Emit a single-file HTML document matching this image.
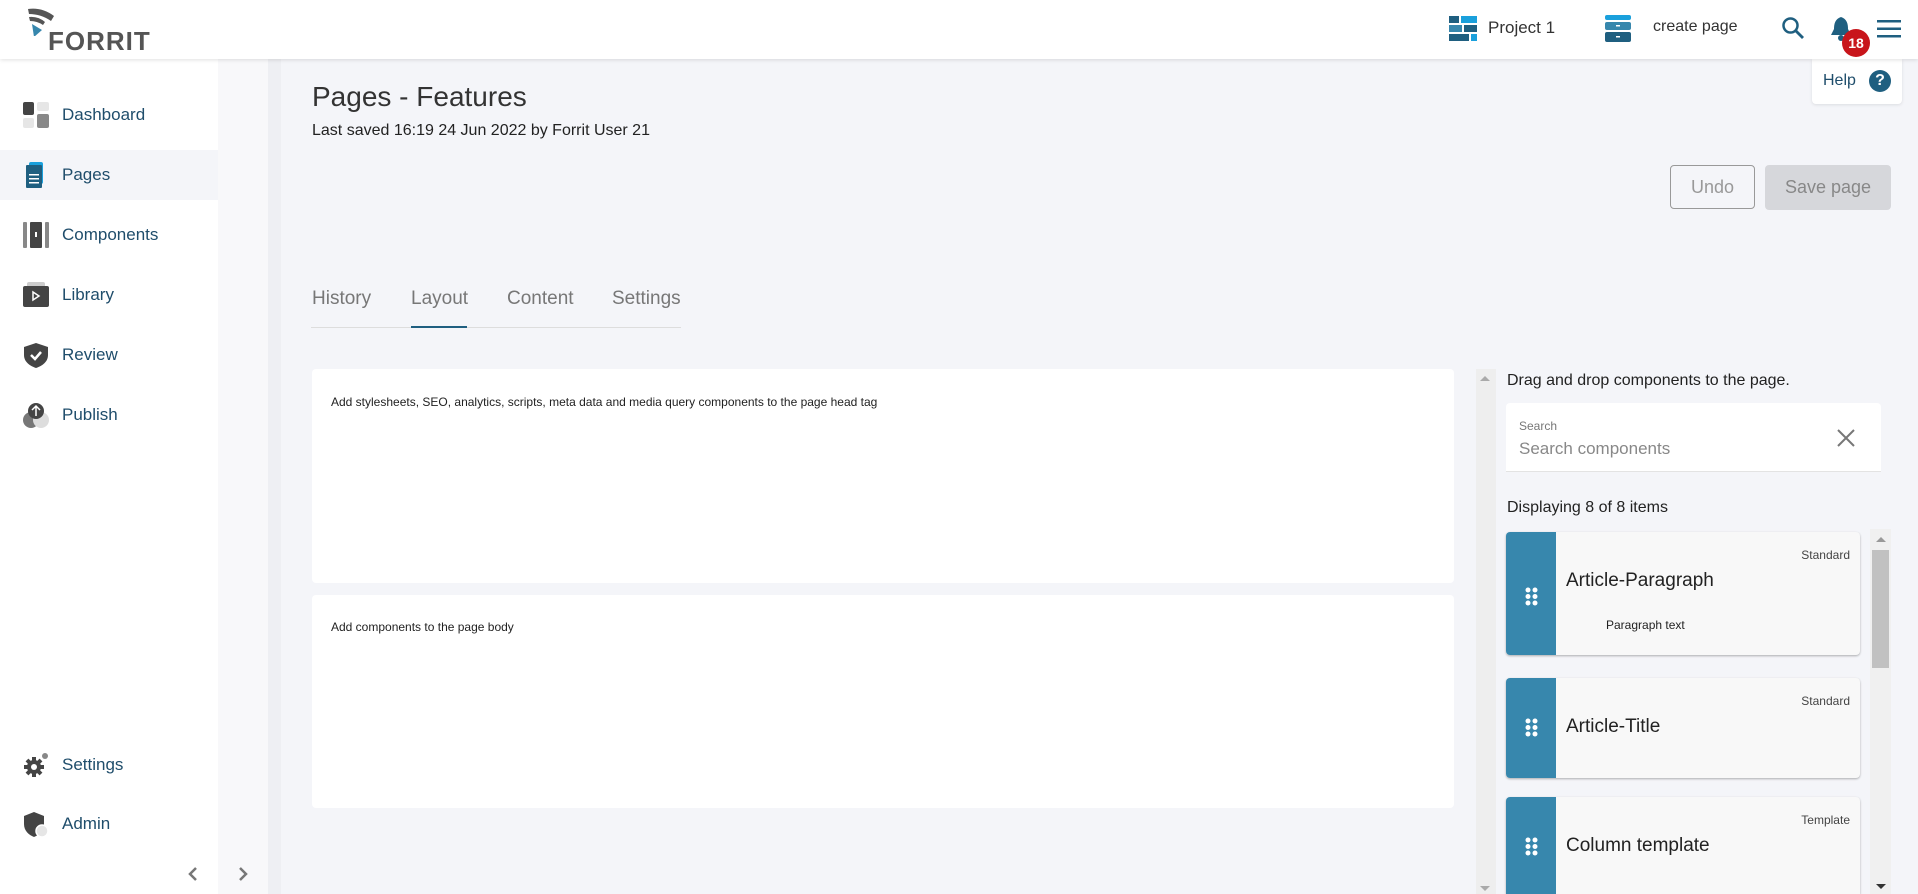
<!DOCTYPE html>
<html style="overflow:hidden;height:894px"><head><meta charset="utf-8"><style>
*{margin:0;padding:0;box-sizing:border-box}
html,body{overflow:hidden}
body{width:1918px;height:894px;background:#f4f5f9;font-family:"Liberation Sans",sans-serif;position:relative;color:#333}
.abs{position:absolute}
#hdr{left:0;top:0;width:1918px;height:59px;background:#fff;box-shadow:0 1px 4px rgba(0,0,0,.12);z-index:5}
#side{left:0;top:59px;width:218px;height:835px;background:#fff}
#strip{left:218px;top:59px;width:50px;height:835px;background:#f8f8fa}
#strip2{left:268px;top:59px;width:13px;height:835px;background:#eeeff3}
.nav{position:absolute;left:0;width:218px;height:50px;font-size:17px;color:#1f4d6b;line-height:50px;padding-left:62px}
.nav svg{position:absolute;left:23px;top:12px}
.sel{background:#f4f5f9}
.box{background:#fff;border-radius:4px;position:absolute}
.card{position:absolute;left:1506px;width:354px;background:#f8f8f8;border-radius:4px;box-shadow:0 1px 2px rgba(0,0,0,.3);overflow:hidden}
.card .bar{position:absolute;left:0;top:0;bottom:0;width:50px;background:#3787ad}
.card .t{position:absolute;left:60px;font-size:19px;color:#222}
.card .k{position:absolute;right:10px;top:16px;font-size:12px;color:#444}
.dots{position:absolute;left:19px;width:13px}
</style></head><body>
<div id="hdr" class="abs">
  <svg class="abs" style="left:26px;top:6px" width="30" height="30" viewBox="0 0 30 30"><path d="M2 3 Q16 1 28 10 L25 15 Q15 8 3 8Z" fill="#555"/><path d="M3 11 Q12 10 19 16 L17 19 Q11 15 4 15Z" fill="#555"/><path d="M6 18 L16 24 L8 31Z" fill="#3787ad"/></svg>
  <div class="abs" style="left:48px;top:26px;font-size:26px;font-weight:bold;color:#555;letter-spacing:1px">FORRIT</div>
  <svg class="abs" style="left:1449px;top:16px" width="28" height="26" viewBox="0 0 28 26"><rect x="0" y="0" width="10" height="7" fill="#1f5f80"/><rect x="12" y="0" width="16" height="7" fill="#1aa0dc"/><rect x="0" y="9" width="13" height="7" fill="#3787ad"/><rect x="15" y="9" width="13" height="7" fill="#1f5f80"/><rect x="0" y="18" width="20" height="7" fill="#1f5f80"/><rect x="22" y="18" width="6" height="7" fill="#1aa0dc"/></svg>
  <div class="abs" style="left:1488px;top:18px;font-size:17px;color:#333">Project 1</div>
  <svg class="abs" style="left:1605px;top:15px" width="26" height="27" viewBox="0 0 26 27"><rect y="0" width="26" height="5" rx="2" fill="#1aa0dc"/><rect y="7" width="26" height="8" rx="2" fill="#3787ad"/><rect y="17" width="26" height="10" rx="2" fill="#1f5f80"/><rect x="11" y="10" width="4" height="1.5" fill="#fff"/><rect x="11" y="21" width="4" height="1.5" fill="#fff"/></svg>
  <div class="abs" style="left:1653px;top:18px;font-size:16px;color:#333">create page</div>
  <svg class="abs" style="left:1781px;top:16px" width="24" height="24" viewBox="0 0 24 24"><circle cx="9.5" cy="9.5" r="7" fill="none" stroke="#1f5f80" stroke-width="2.5"/><path d="M14.5 14.5 L22 22" stroke="#1f5f80" stroke-width="2.8"/></svg>
  <svg class="abs" style="left:1830px;top:16px" width="22" height="26" viewBox="0 0 22 26"><path d="M11 1 C5 3 4 8 4 13 L1 19 L21 19 L18 13 C18 8 17 3 11 1Z" fill="#1f5f80"/><circle cx="11" cy="22" r="3" fill="#1f5f80"/></svg>
  <div class="abs" style="left:1842px;top:29px;width:28px;height:28px;border-radius:50%;background:#c8151b;color:#fff;font-size:14px;font-weight:bold;text-align:center;line-height:28px">18</div>
  <svg class="abs" style="left:1877px;top:20px" width="24" height="18" viewBox="0 0 24 18"><rect y="0" width="24" height="2.5" fill="#1f5f80"/><rect y="7.5" width="24" height="2.5" fill="#1f5f80"/><rect y="15" width="24" height="2.5" fill="#1f5f80"/></svg>
</div>
<div id="side" class="abs">
  <div class="nav" style="top:31px"><svg width="26" height="26" viewBox="0 0 26 26"><rect x="0" y="0" width="11" height="13" rx="2" fill="#444"/><rect x="14" y="0" width="12" height="9" rx="2" fill="#e6e6e6"/><rect x="0" y="16" width="11" height="10" rx="2" fill="#e6e6e6"/><rect x="14" y="12" width="12" height="14" rx="2" fill="#888"/></svg>Dashboard</div>
  <div class="nav sel" style="top:91px"><svg width="26" height="26" viewBox="0 0 26 26"><rect x="6" y="0" width="14" height="22" rx="2" fill="#1aa0dc"/><rect x="3" y="3" width="16" height="23" rx="1" fill="#1f5f80"/><rect x="6" y="12" width="10" height="1.5" fill="#fff"/><rect x="6" y="16" width="10" height="1.5" fill="#fff"/><rect x="6" y="20" width="10" height="1.5" fill="#fff"/></svg>Pages</div>
  <div class="nav" style="top:151px"><svg width="26" height="26" viewBox="0 0 26 26"><rect x="0" y="0" width="4" height="26" rx="1" fill="#888"/><rect x="7" y="0" width="12" height="26" rx="1" fill="#444"/><rect x="22" y="0" width="4" height="26" rx="1" fill="#888"/><rect x="12" y="10" width="2" height="5" fill="#fff"/></svg>Components</div>
  <div class="nav" style="top:211px"><svg width="26" height="26" viewBox="0 0 26 26"><rect x="4" y="0" width="18" height="6" rx="2" fill="#ccc"/><rect x="0" y="4" width="26" height="21" rx="2" fill="#444"/><path d="M10 10 L16 14 L10 18Z" fill="none" stroke="#fff" stroke-width="1.5"/></svg>Library</div>
  <div class="nav" style="top:271px"><svg width="26" height="26" viewBox="0 0 26 26"><path d="M13 1 L25 5 L25 13 C25 20 19 24 13 26 C7 24 1 20 1 13 L1 5Z" fill="#444"/><path d="M8 13 L12 17 L18 10" stroke="#fff" stroke-width="2.5" fill="none"/></svg>Review</div>
  <div class="nav" style="top:331px"><svg width="26" height="26" viewBox="0 0 26 26"><circle cx="8" cy="18" r="8" fill="#777"/><circle cx="18" cy="18" r="8" fill="#ddd"/><circle cx="13" cy="9" r="8" fill="#444"/><path d="M13 14 L13 5 M9 8 L13 4 L17 8" stroke="#fff" stroke-width="1.5" fill="none"/></svg>Publish</div>
  <div class="nav" style="top:681px"><svg width="26" height="26" viewBox="0 0 26 26"><g stroke="#444" stroke-width="4"><path d="M11 5 L11 25 M1 15 L21 15 M4 8 L18 22 M18 8 L4 22"/></g><circle cx="11" cy="15" r="7" fill="#444"/><circle cx="11" cy="15" r="3" fill="#fff"/><circle cx="22" cy="4" r="3" fill="#888"/></svg>Settings</div>
  <div class="nav" style="top:740px"><svg width="26" height="26" viewBox="0 0 26 26"><path d="M11 1 L21 5 L21 13 C21 20 16 24 11 26 C6 24 1 20 1 13 L1 5Z" fill="#444"/><circle cx="19" cy="20" r="6" fill="#e6e6e6" stroke="#fff" stroke-width="1.5"/></svg>Admin</div>
  <svg class="abs" style="left:187px;top:807px" width="12" height="16" viewBox="0 0 12 16"><path d="M9 2 L3 8 L9 14" stroke="#777" stroke-width="2.5" fill="none"/></svg>
</div>
<div id="strip" class="abs"></div>
<div id="strip2" class="abs"></div>
<svg class="abs" style="left:237px;top:866px" width="12" height="16" viewBox="0 0 12 16"><path d="M3 2 L9 8 L3 14" stroke="#777" stroke-width="2.5" fill="none"/></svg>

<div class="abs" style="left:312px;top:81px;font-size:28px;color:#333">Pages - Features</div>
<div class="abs" style="left:312px;top:122px;font-size:16px;color:#222">Last saved 16:19 24 Jun 2022 by Forrit User 21</div>
<div class="abs" style="left:1812px;top:59px;width:90px;height:45px;background:#fff;border-radius:0 0 4px 4px;box-shadow:0 1px 3px rgba(0,0,0,.1)"><span class="abs" style="left:11px;top:13px;font-size:16px;color:#1f4d6b">Help</span><div class="abs" style="left:57px;top:11px;width:22px;height:22px;border-radius:50%;background:#1f5f80;color:#fff;font-weight:bold;font-size:16px;text-align:center;line-height:22px">?</div></div>
<div class="abs" style="left:1670px;top:165px;width:85px;height:44px;border:1px solid #999;border-radius:4px;text-align:center;line-height:42px;font-size:18px;color:#999">Undo</div>
<div class="abs" style="left:1765px;top:165px;width:126px;height:45px;background:#d6d7db;border-radius:4px;text-align:center;line-height:45px;font-size:18px;color:#888">Save page</div>

<div class="abs" style="left:312px;top:288px;font-size:19px;color:#777">History</div>
<div class="abs" style="left:411px;top:288px;font-size:19px;color:#777">Layout</div>
<div class="abs" style="left:507px;top:288px;font-size:19px;color:#777">Content</div>
<div class="abs" style="left:612px;top:288px;font-size:19px;color:#777">Settings</div>
<div class="abs" style="left:311px;top:327px;width:370px;height:1px;background:#ddd"></div>
<div class="abs" style="left:411px;top:326px;width:56px;height:2px;background:#1f5f80"></div>

<div class="box" style="left:312px;top:369px;width:1142px;height:214px"><div class="abs" style="left:19px;top:26px;font-size:12px;color:#222">Add stylesheets, SEO, analytics, scripts, meta data and media query components to the page head tag</div></div>
<div class="box" style="left:312px;top:595px;width:1142px;height:213px"><div class="abs" style="left:19px;top:25px;font-size:12px;color:#222">Add components to the page body</div></div>

<div class="abs" style="left:1476px;top:369px;width:20px;height:525px;background:#eee"></div>
<div class="abs" style="left:1480px;top:376px;border:5px solid transparent;border-bottom:5px solid #aaa;border-top:0"></div>
<div class="abs" style="left:1480px;top:886px;border:5px solid transparent;border-top:5px solid #aaa;border-bottom:0"></div>
<div class="abs" style="left:1507px;top:372px;font-size:16px;color:#222">Drag and drop components to the page.</div>
<div class="abs" style="left:1506px;top:403px;width:375px;height:69px;background:#fff;border-radius:4px 4px 0 0;border-bottom:1px solid #e3e3e3">
  <div class="abs" style="left:13px;top:16px;font-size:12px;color:#777">Search</div>
  <div class="abs" style="left:13px;top:36px;font-size:17px;color:#888">Search components</div>
  <svg class="abs" style="left:331px;top:26px" width="18" height="18" viewBox="0 0 18 18"><path d="M1 1 L17 17 M17 1 L1 17" stroke="#777" stroke-width="2"/></svg>
</div>
<div class="abs" style="left:1507px;top:499px;font-size:16px;color:#222">Displaying 8 of 8 items</div>

<div class="abs" style="left:1870px;top:529px;width:21px;height:365px;background:#f0f0f0"></div>
<div class="abs" style="left:1872px;top:550px;width:17px;height:118px;background:#c1c1c1"></div>
<div class="abs" style="left:1876px;top:537px;border:5px solid transparent;border-bottom:5px solid #999;border-top:0"></div>
<div class="abs" style="left:1876px;top:884px;border:5px solid transparent;border-top:5px solid #333;border-bottom:0"></div>

<div class="card" style="top:532px;height:123px"><div class="bar"><svg class="dots" style="top:55px" width="13" height="19" viewBox="0 0 13 19"><g fill="#fff"><circle cx="3" cy="3" r="2.5"/><circle cx="10" cy="3" r="2.5"/><circle cx="3" cy="9.5" r="2.5"/><circle cx="10" cy="9.5" r="2.5"/><circle cx="3" cy="16" r="2.5"/><circle cx="10" cy="16" r="2.5"/></g></svg></div><div class="k">Standard</div><div class="t" style="top:38px">Article-Paragraph</div><div class="abs" style="left:100px;top:86px;font-size:12px;color:#222">Paragraph text</div></div>
<div class="card" style="top:678px;height:100px"><div class="bar"><svg class="dots" style="top:40px" width="13" height="19" viewBox="0 0 13 19"><g fill="#fff"><circle cx="3" cy="3" r="2.5"/><circle cx="10" cy="3" r="2.5"/><circle cx="3" cy="9.5" r="2.5"/><circle cx="10" cy="9.5" r="2.5"/><circle cx="3" cy="16" r="2.5"/><circle cx="10" cy="16" r="2.5"/></g></svg></div><div class="k">Standard</div><div class="t" style="top:38px">Article-Title</div></div>
<div class="card" style="top:797px;height:97px;border-radius:4px 4px 0 0"><div class="bar"><svg class="dots" style="top:40px" width="13" height="19" viewBox="0 0 13 19"><g fill="#fff"><circle cx="3" cy="3" r="2.5"/><circle cx="10" cy="3" r="2.5"/><circle cx="3" cy="9.5" r="2.5"/><circle cx="10" cy="9.5" r="2.5"/><circle cx="3" cy="16" r="2.5"/><circle cx="10" cy="16" r="2.5"/></g></svg></div><div class="k">Template</div><div class="t" style="top:38px">Column template</div></div>
</body></html>
